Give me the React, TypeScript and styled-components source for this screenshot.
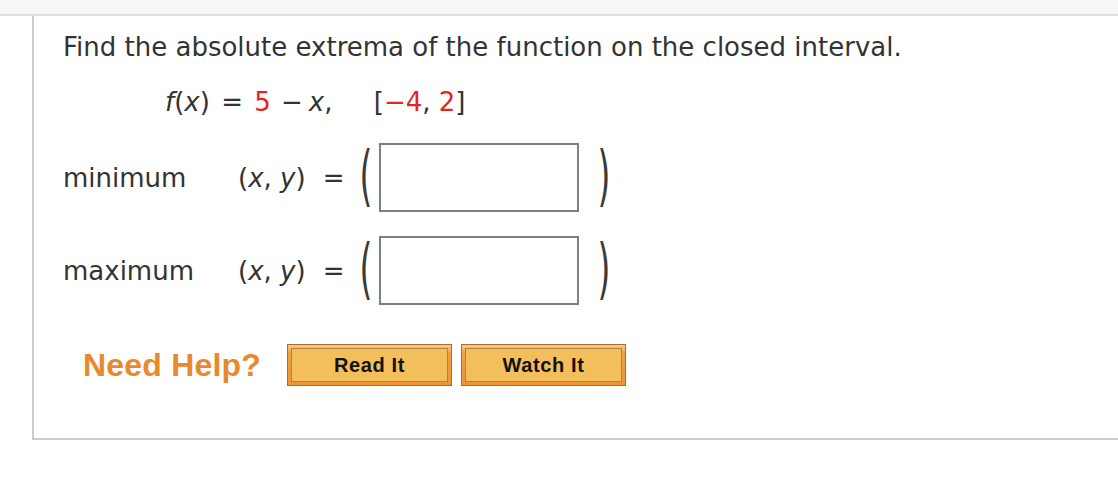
import React from 'react';
import styled, { createGlobalStyle } from 'styled-components';

const Global = createGlobalStyle`
  html, body {
    margin: 0;
    padding: 0;
    background: #ffffff;
    overflow: hidden;
  }
  body {
    font-family: "DejaVu Sans", Verdana, sans-serif;
    color: #333333;
  }
`;

const TopStrip = styled.div`
  height: 14px;
  background: #f6f6f6;
  border-bottom: 2px solid #dedede;
`;

const Card = styled.section`
  margin-left: 32px;
  width: 1200px;
  height: 424px;
  box-sizing: border-box;
  border-left: 2px solid #cccccc;
  border-bottom: 2px solid #cccccc;
  padding: 16px 0 0 29px;
`;

const Prompt = styled.p`
  margin: 0;
  font-size: 26px;
  line-height: 30px;
`;

const Formula = styled.div`
  margin: 25px 0 0 102px;
  font-size: 26px;
  line-height: 30px;
  white-space: pre;
`;

const Var = styled.i`
  font-style: italic;
`;

const Red = styled.span`
  color: #e3261f;
`;

// binary operators get a bit of extra room, as in typeset maths
const Op = styled.span<{ $left?: number; $right?: number }>`
  margin-left: ${p => p.$left ?? 3}px;
  margin-right: ${p => p.$right ?? 3}px;
`;

const AnswerRow = styled.div<{ $top: number }>`
  display: flex;
  align-items: center;
  height: 69px;
  margin-top: ${p => p.$top}px;
  font-size: 26px;
  line-height: 30px;
`;

const Label = styled.span`
  width: 175px;
  flex: none;
`;

const Pair = styled.span`
  width: 115px;
  flex: none;
  white-space: nowrap;
`;

const Paren = styled.span<{ $gap?: number }>`
  flex: none;
  width: 26px;
  margin-left: ${p => p.$gap ?? 0}px;
  font-family: "DejaVu Sans", sans-serif;
  font-size: 66px;
  line-height: 69px;
  text-align: center;
  color: #3a3a3a;
  transform: translateY(-2px) scaleX(0.5);
`;

const Box = styled.input`
  flex: none;
  width: 200px;
  height: 69px;
  box-sizing: border-box;
  border: 2px solid #7f7f7f;
  margin: 0;
  padding: 0;
  background: #fff;
  outline: none;
`;

const HelpRow = styled.div`
  display: flex;
  align-items: center;
  height: 42px;
  margin: 39px 0 0 20px;
`;

const HelpTitle = styled.span`
  font-family: "Liberation Sans", Arial, sans-serif;
  font-weight: bold;
  font-size: 32px;
  color: #e8892c;
  width: 204px;
  flex: none;
  letter-spacing: 0.2px;
`;

const HelpButton = styled.button`
  flex: none;
  width: 165px;
  height: 42px;
  margin-right: 9px;
  padding: 3px;
  box-sizing: border-box;
  border: 1px solid #a96d2e;
  background: linear-gradient(#f8c893 0%, #efa044 22%, #ee9435 100%);
  cursor: pointer;
  display: flex;

  span {
    flex: 1;
    display: flex;
    align-items: center;
    justify-content: center;
    border: 1px solid #b8803c;
    background: #f2bf5c;
    font-family: "Liberation Sans", Arial, sans-serif;
    font-weight: bold;
    font-size: 20px;
    color: #15120c;
    letter-spacing: 0.6px;
  }
`;

const Answer: React.FC<{ label: string; top: number }> = ({ label, top }) => (
  <AnswerRow $top={top}>
    <Label>{label}</Label>
    <Pair>
      (<Var>x</Var>, <Var>y</Var>)<Op $left={17} $right={0}>=</Op>
    </Pair>
    <Paren>(</Paren>
    <Box type="text" aria-label={label} />
    <Paren $gap={12}>)</Paren>
  </AnswerRow>
);

export default function App() {
  return (
    <>
      <Global />
      <TopStrip />
      <Card>
        <Prompt>Find the absolute extrema of the function on the closed interval.</Prompt>
        <Formula>
          <Var>f</Var>(<Var>x</Var>) <Op>=</Op> <Red>5</Red> <Op $left={2} $right={6}>−</Op><Var>x</Var>,{'     '}[<Red>−4</Red>, <Red>2</Red>]
        </Formula>
        <Answer label="minimum" top={26} />
        <Answer label="maximum" top={24} />
        <HelpRow>
          <HelpTitle>Need Help?</HelpTitle>
          <HelpButton type="button"><span>Read It</span></HelpButton>
          <HelpButton type="button"><span>Watch It</span></HelpButton>
        </HelpRow>
      </Card>
    </>
  );
}
